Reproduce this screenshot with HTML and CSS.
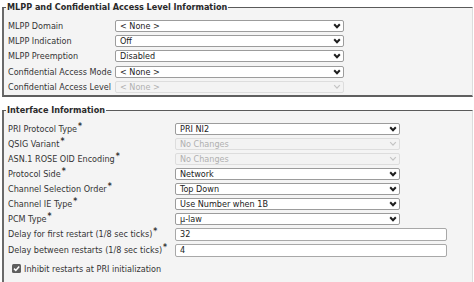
FILE: index.html
```html
<!DOCTYPE html>
<html>
<head>
<meta charset="utf-8">
<link rel="stylesheet" href="styles.css">
</head>
<body>
<fieldset class="fs fs1">
  <legend class="lg">MLPP and Confidential Access Level Information</legend>
  <div class="row r1"><span class="lbl w1">MLPP Domain</span><div class="sel s1"><span>&lt; None &gt;</span><svg class="chev" viewBox="0 0 8 6" width="8" height="6"><polyline points="1.2,1.2 4,4.2 6.8,1.2" /></svg></div></div>
  <div class="row r1"><span class="lbl w1">MLPP Indication</span><div class="sel s1"><span>Off</span><svg class="chev" viewBox="0 0 8 6" width="8" height="6"><polyline points="1.2,1.2 4,4.2 6.8,1.2" /></svg></div></div>
  <div class="row r1"><span class="lbl w1">MLPP Preemption</span><div class="sel s1"><span>Disabled</span><svg class="chev" viewBox="0 0 8 6" width="8" height="6"><polyline points="1.2,1.2 4,4.2 6.8,1.2" /></svg></div></div>
  <div class="row r1"><span class="lbl w1">Confidential Access Mode</span><div class="sel s1"><span>&lt; None &gt;</span><svg class="chev" viewBox="0 0 8 6" width="8" height="6"><polyline points="1.2,1.2 4,4.2 6.8,1.2" /></svg></div></div>
  <div class="row r1"><span class="lbl w1">Confidential Access Level</span><div class="sel s1 dis"><span>&lt; None &gt;</span><svg class="chev" viewBox="0 0 8 6" width="8" height="6"><polyline points="1.2,1.2 4,4.2 6.8,1.2" /></svg></div></div>
</fieldset>
<fieldset class="fs fs2">
  <legend class="lg">Interface Information</legend>
  <div class="row r2"><span class="lbl w2">PRI Protocol Type<b class="req">*</b></span><div class="sel s2"><span>PRI NI2</span><svg class="chev" viewBox="0 0 8 6" width="8" height="6"><polyline points="1.2,1.2 4,4.2 6.8,1.2" /></svg></div></div>
  <div class="row r2"><span class="lbl w2">QSIG Variant<b class="req">*</b></span><div class="sel s2 dis"><span>No Changes</span><svg class="chev" viewBox="0 0 8 6" width="8" height="6"><polyline points="1.2,1.2 4,4.2 6.8,1.2" /></svg></div></div>
  <div class="row r2"><span class="lbl w2">ASN.1 ROSE OID Encoding<b class="req">*</b></span><div class="sel s2 dis"><span>No Changes</span><svg class="chev" viewBox="0 0 8 6" width="8" height="6"><polyline points="1.2,1.2 4,4.2 6.8,1.2" /></svg></div></div>
  <div class="row r2"><span class="lbl w2">Protocol Side<b class="req">*</b></span><div class="sel s2"><span>Network</span><svg class="chev" viewBox="0 0 8 6" width="8" height="6"><polyline points="1.2,1.2 4,4.2 6.8,1.2" /></svg></div></div>
  <div class="row r2"><span class="lbl w2">Channel Selection Order<b class="req">*</b></span><div class="sel s2"><span>Top Down</span><svg class="chev" viewBox="0 0 8 6" width="8" height="6"><polyline points="1.2,1.2 4,4.2 6.8,1.2" /></svg></div></div>
  <div class="row r2"><span class="lbl w2">Channel IE Type<b class="req">*</b></span><div class="sel s2"><span>Use Number when 1B</span><svg class="chev" viewBox="0 0 8 6" width="8" height="6"><polyline points="1.2,1.2 4,4.2 6.8,1.2" /></svg></div></div>
  <div class="row r2"><span class="lbl w2">PCM Type<b class="req">*</b></span><div class="sel s2"><span>µ-law</span><svg class="chev" viewBox="0 0 8 6" width="8" height="6"><polyline points="1.2,1.2 4,4.2 6.8,1.2" /></svg></div></div>
  <div class="row r3"><span class="lbl w2">Delay for first restart (1/8 sec ticks)<b class="req">*</b></span><div class="inp">32</div></div>
  <div class="row r3"><span class="lbl w2">Delay between restarts (1/8 sec ticks)<b class="req">*</b></span><div class="inp">4</div></div>
  <div class="row chkrow"><span class="chk"><svg viewBox="0 0 9 9" width="9" height="9"><polyline points="2,4.6 3.8,6.4 7.2,2.4" /></svg></span><span class="lbl">Inhibit restarts at PRI initialization</span></div>
</fieldset>
</body>
</html>
```
FILE: styles.css
```css
html, body {
  margin: 0;
  padding: 0;
  background: #ffffff;
}
body {
  font-family: "DejaVu Sans Condensed", "DejaVu Sans", sans-serif;
  font-size: 9px;
  color: #333333;
  width: 474px;
  height: 282px;
  overflow: hidden;
}
.fs {
  margin: 0 0 0 2px;
  padding: 0 0 0 4px;
  border: 1px solid #5a5a5a;
  border-left: 2px solid #6a6a6a;
  border-right: 1px solid #dcdcdc;
  background: #f4f4f4;
  width: 464px;
  min-width: 0;
}
.fs1 {
  margin-top: 2px;
  padding-bottom: 1px;
  border-bottom: 2px solid #5f5f5f;
}
.fs2 {
  margin-top: 8px;
  border-bottom: none;
  min-height: 180px;
}
.lg + .row {
  margin-top: 5px;
}
.lg {
  font-weight: bold;
  font-size: 9px;
  line-height: 11px;
  padding: 0 1px;
  margin-left: -2px;
  color: #2a2a2a;
}
.row {
  display: flex;
  align-items: center;
}
.r1 { height: 15.3px; }
.r2 { height: 15px; }
.r3 { height: 16px; }
.lbl {
  white-space: nowrap;
  color: #353535;
}
.w1 { width: 107px; flex: none; }
.w2 { width: 167px; flex: none; }
.req {
  font-weight: bold;
  font-size: 8.5px;
  position: relative;
  top: -3px;
  margin-left: 1px;
  color: #333;
}
.sel {
  box-sizing: border-box;
  height: 12px;
  background: #ffffff;
  border: 1px solid #9c9c9c;
  border-radius: 2px;
  display: flex;
  align-items: center;
  justify-content: space-between;
  padding: 0 2px 0 4px;
  color: #222;
  line-height: 10px;
}
.s1 { width: 229px; }
.s2 { width: 225px; }
.chev {
  fill: none;
  stroke: #1e1e1e;
  stroke-width: 2;
}
.dis {
  background: #f3f3f3;
  border-color: #dddddd;
  color: #b0b0b0;
}
.dis .chev {
  stroke: #c4c4c4;
  stroke-width: 1.2;
}
.inp {
  box-sizing: border-box;
  width: 272px;
  height: 13px;
  background: #ffffff;
  border: 1px solid #a8a8a8;
  border-radius: 2px;
  padding: 0 4px;
  line-height: 11px;
  color: #222;
}
.chkrow {
  height: 21px;
  padding-left: 4px;
}
.chk {
  width: 9px;
  height: 9px;
  background: #5e5e5e;
  border-radius: 1.5px;
  margin-right: 3px;
  display: flex;
}
.chk svg {
  fill: none;
  stroke: #ffffff;
  stroke-width: 1.5;
}
```
